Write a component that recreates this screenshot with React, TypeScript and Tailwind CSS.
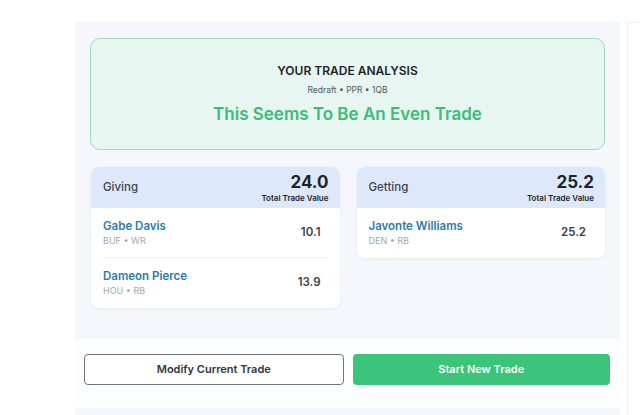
import React from 'react';

type Player = { name: string; team: string; pos: string; value: string };

const giving: Player[] = [
  { name: 'Gabe Davis', team: 'BUF', pos: 'WR', value: '10.1' },
  { name: 'Dameon Pierce', team: 'HOU', pos: 'RB', value: '13.9' },
];

const getting: Player[] = [
  { name: 'Javonte Williams', team: 'DEN', pos: 'RB', value: '25.2' },
];

const SideCard: React.FC<{ title: string; total: string; players: Player[] }> = ({ title, total, players }) => (
  <div className="rounded-lg bg-white shadow-[0_1px_4px_rgba(0,0,0,0.06)] overflow-hidden self-start">
    <div className="flex items-start justify-between bg-[#dde9fb] pl-[12px] pr-[11px] pt-[5px] h-[41px]">
      <span className="mt-[7px] text-[11.5px] font-medium text-[#3f4550]">{title}</span>
      <div className="flex flex-col items-end">
        <span className="text-[17px] font-bold leading-[20px] text-[#1f2329]">{total}</span>
        <span className="text-[8px] font-semibold leading-[12px] text-[#1f2329]">Total Trade Value</span>
      </div>
    </div>
    <div className="px-[12px]">
      {players.map((p, i) => (
        <div
          key={p.name}
          className={
            'flex items-center justify-between h-[50px] ' +
            (i < players.length - 1 ? 'border-b border-[#eef0f3]' : '')
          }
        >
          <div className="flex flex-col">
            <span className="text-[11.5px] font-semibold leading-[16px] text-[#2b7bab]">{p.name}</span>
            <span className="text-[9px] leading-[14px] text-[#a3a7ad]">
              {p.team} • {p.pos}
            </span>
          </div>
          <span className="mr-[7px] text-[11.5px] font-semibold text-[#3a3f47]">{p.value}</span>
        </div>
      ))}
    </div>
  </div>
);

export default function App() {
  return (
    <div
      className="flex h-[415px] w-[640px] overflow-hidden bg-white"
      style={{ fontFamily: 'Inter, "Open Sans", sans-serif' }}
    >
      <div className="ml-[75px] mt-[22px] flex w-[545px] flex-col">
        <div className="bg-[#f5f7fc] px-[15px] pt-[16px] pb-[31px]">
          <div className="flex h-[112px] flex-col items-center justify-center rounded-[10px] border border-[#9fd9be] bg-[#e7f6f0]">
            <h2 className="text-[12px] font-semibold leading-[16px] text-[#1f2329]">YOUR TRADE ANALYSIS</h2>
            <p className="mt-[5px] text-[8.5px] leading-[12px] text-[#555a61]">Redraft • PPR • 1QB</p>
            <p className="mt-[7px] text-[17px] font-semibold leading-[22px] text-[#3dbb79]">
              This Seems To Be An Even Trade
            </p>
          </div>
          <div className="mt-[17px] grid grid-cols-2 gap-[17px] pl-[1px]">
            <SideCard title="Giving" total="24.0" players={giving} />
            <SideCard title="Getting" total="25.2" players={getting} />
          </div>
        </div>
        <div className="flex gap-[9px] bg-[#fcfdfe] pl-[9px] pr-[10px] pt-[15px] h-[62px]">
          <button className="h-[31px] flex-1 rounded-[4px] border border-[#6f757d] bg-white text-[11px] font-semibold text-[#2f343b]">
            Modify Current Trade
          </button>
          <button className="h-[31px] flex-1 rounded-[4px] bg-[#3cc47a] text-[11px] font-semibold text-white">
            Start New Trade
          </button>
        </div>
        <div className="mt-[7px] flex-1 bg-[#f5f7fc]" />
      </div>
      <div className="ml-[7px] mt-[22px] flex-1 border-l border-t border-[#eef0f4] bg-white" />
    </div>
  );
}
